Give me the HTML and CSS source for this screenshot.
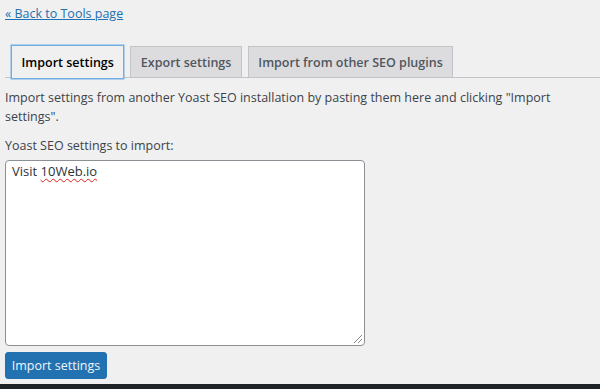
FILE: index.html
```html
<!DOCTYPE html>
<html>
<head>
<meta charset="utf-8">
<link rel="stylesheet" href="styles.css">
</head>
<body>
<div class="wrap">
  <p class="back"><a href="#">« Back to Tools page</a></p>
  <nav class="tabs">
    <a class="tab active" href="#">Import settings</a>
    <a class="tab" href="#">Export settings</a>
    <a class="tab" href="#">Import from other SEO plugins</a>
  </nav>
  <p class="desc">Import settings from another Yoast SEO installation by pasting them here and clicking "Import settings".</p>
  <p class="label">Yoast SEO settings to import:</p>
  <div class="area">Visit <span class="spell">10Web.io</span><span class="grip"></span></div>
  <button class="btn">Import settings</button>
</div>
<div class="footer"></div>
</body>
</html>
```
FILE: styles.css
```css
html, body { margin: 0; padding: 0; }
body {
  background: #f0f0f1;
  font-family: "Open Sans", "Noto Sans", sans-serif;
  font-size: 12.5px;
  color: #3c434a;
  width: 600px;
  height: 389px;
  overflow: hidden;
  display: flex;
  flex-direction: column;
}
.wrap {
  padding: 0 0 0 5px;
  flex: 1;
}
.back { margin: 5px 0 0; line-height: 17px; }
.back a { color: #2271b1; text-decoration: underline; }
.tabs {
  margin-top: 23px;
  display: flex;
  gap: 6px;
  padding-left: 6px;
  border-bottom: 1px solid #c3c4c7;
  height: 32px;
  align-items: flex-end;
}
.tab {
  box-sizing: border-box;
  height: 31px;
  display: flex;
  align-items: center;
  padding: 0 9.5px;
  border: 1px solid #c3c4c7;
  border-bottom: none;
  background: #dcdcde;
  color: #50575e;
  font-weight: 600;
  text-decoration: none;
}
.tab.active {
  background: #f0f0f1;
  color: #000;
  border: 1px solid #72aee6;
  height: 34px;
  margin-bottom: -2px;
  box-shadow: 0 0 0 0.5px #72aee6;
}
.desc { margin: 10px 0 0; line-height: 19px; width: 555px; }
.label { margin: 10px 0 0; line-height: 19px; }
.area {
  position: relative;
  box-sizing: border-box;
  margin-top: 5px;
  width: 360px;
  height: 186px;
  background: #fff;
  border: 1px solid #8c8f94;
  border-radius: 4px;
  padding: 1px 6px;
  color: #2c3338;
  font-size: 13px;
}
.spell {
  text-decoration: underline wavy #e02020;
  text-decoration-thickness: 1px;
  text-underline-offset: 2px;
}
.grip {
  position: absolute;
  right: 2px;
  bottom: 2px;
  width: 8px;
  height: 8px;
  background: linear-gradient(135deg, transparent 45%, #888 45%, #888 55%, transparent 55%, transparent 70%, #888 70%, #888 80%, transparent 80%);
}
.btn {
  display: block;
  margin-top: 6px;
  width: 102px;
  height: 27px;
  background: #2271b1;
  border: 1px solid #2271b1;
  border-radius: 3px;
  color: #f0f6fc;
  font-family: inherit;
  font-size: 12.5px;
  padding: 0;
}
.footer { height: 5px; background: #1d2327; }
```
